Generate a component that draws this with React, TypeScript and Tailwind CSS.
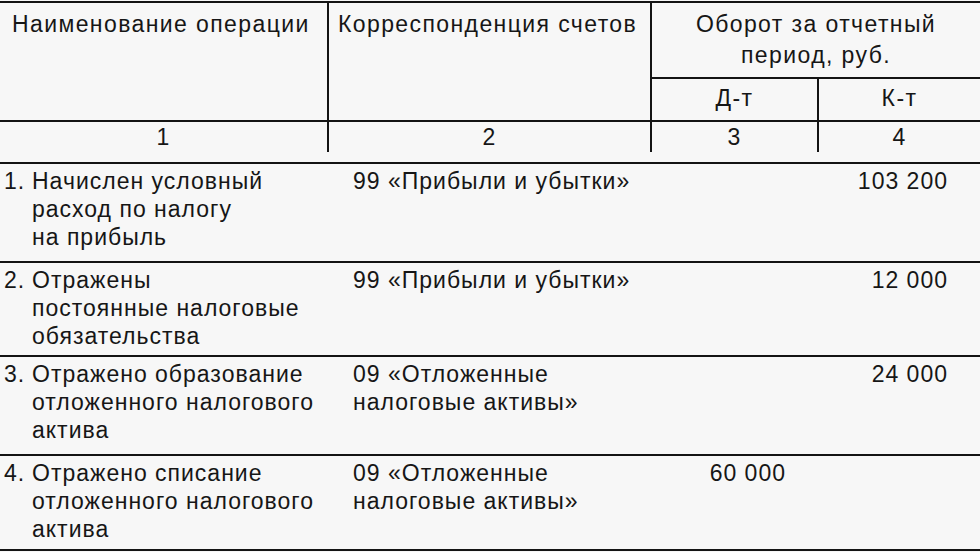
import React from "react"

interface Entry {
  num: string
  name: string[]
  account: string[]
  debit: string
  credit: string
  height: string
}

const entries: Entry[] = [
  {
    num: "1.",
    name: ["Начислен условный", "расход по налогу", "на прибыль"],
    account: ["99 «Прибыли и убытки»"],
    debit: "",
    credit: "103 200",
    height: "h-[99px]",
  },
  {
    num: "2.",
    name: ["Отражены", "постоянные налоговые", "обязательства"],
    account: ["99 «Прибыли и убытки»"],
    debit: "",
    credit: "12 000",
    height: "h-[94px]",
  },
  {
    num: "3.",
    name: ["Отражено образование", "отложенного налогового", "актива"],
    account: ["09 «Отложенные", "налоговые активы»"],
    debit: "",
    credit: "24 000",
    height: "h-[99px]",
  },
  {
    num: "4.",
    name: ["Отражено списание", "отложенного налогового", "актива"],
    account: ["09 «Отложенные", "налоговые активы»"],
    debit: "60 000",
    credit: "",
    height: "h-[95px]",
  },
]

export default function App() {
  return (
    <div className="w-[980px] h-[552px] overflow-hidden bg-[#f7f7f7] text-[#161616] font-['Liberation_Sans',Arial,sans-serif] text-[23px] tracking-[1px]">
      {/* header */}
      <div className="mt-px border-t-2 border-[#141414] tracking-[1.4px]">
        <div className="grid grid-cols-[327px_323px_167px_1fr] grid-rows-[76px_41px]">
          <div className="row-span-2 pl-[12px] leading-[31px] pt-[6px] whitespace-nowrap">Наименование операции</div>
          <div className="row-span-2 border-l-2 border-[#141414] pl-[9px] leading-[31px] pt-[6px] whitespace-nowrap">
            Корреспонденция счетов
          </div>
          <div className="col-span-2 border-l-2 border-b-2 border-[#141414] text-center leading-[31px] pt-[6px]">
            Оборот за отчетный
            <br />
            период, руб.
          </div>
          <div className="border-l-2 border-[#141414] text-center leading-[39px]">Д-т</div>
          <div className="border-l-2 border-[#141414] text-center leading-[39px]">К-т</div>
        </div>
        <div className="border-t-2 border-[#141414] pb-[10px]">
          <div className="grid grid-cols-[327px_323px_167px_1fr] h-[30px] leading-[30px] text-center">
            <div>1</div>
            <div className="border-l-2 border-[#141414]">2</div>
            <div className="border-l-2 border-[#141414]">3</div>
            <div className="border-l-2 border-[#141414]">4</div>
          </div>
        </div>
      </div>

      {/* body */}
      <div className="border-t-2 border-[#141414]">
        {entries.map((e) => (
          <div
            key={e.num}
            className={`grid grid-cols-[327px_323px_167px_1fr] border-b-2 border-[#141414] pt-[3px] leading-[28px] ${e.height}`}
          >
            <div className="flex pl-[4px] whitespace-nowrap">
              <span className="w-[28px] shrink-0">{e.num}</span>
              <div>
                {e.name.map((l) => (
                  <div key={l}>{l}</div>
                ))}
              </div>
            </div>
            <div className="pl-[26px] whitespace-nowrap">
              {e.account.map((l) => (
                <div key={l}>{l}</div>
              ))}
            </div>
            <div className="text-right pr-[31px]">{e.debit}</div>
            <div className="text-right pr-[32px]">{e.credit}</div>
          </div>
        ))}
      </div>
    </div>
  )
}
